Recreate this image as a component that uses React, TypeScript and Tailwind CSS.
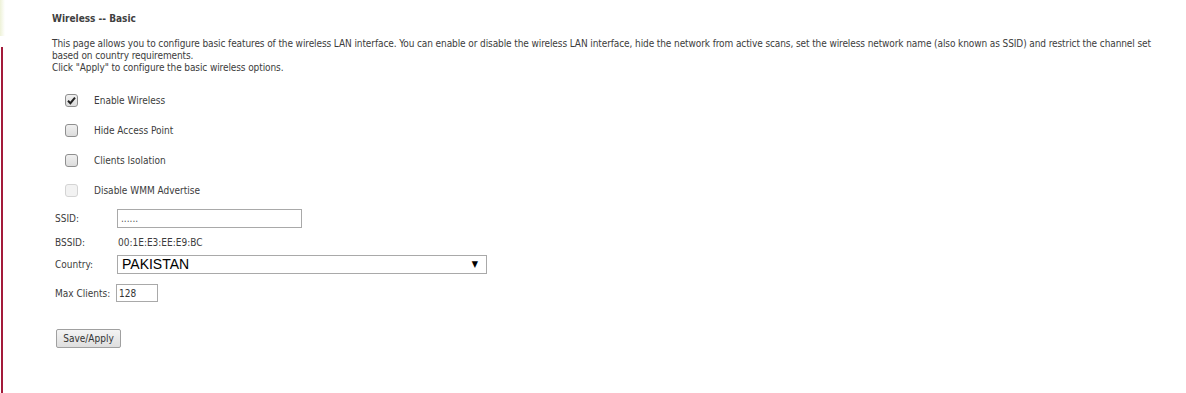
const checks = [
  { label: "Enable Wireless", checked: true, disabled: false },
  { label: "Hide Access Point", checked: false, disabled: false },
  { label: "Clients Isolation", checked: false, disabled: false },
  { label: "Disable WMM Advertise", checked: false, disabled: true },
];

const Box = ({ checked, disabled }: { checked: boolean; disabled: boolean }) => (
  <div
    className={`w-[13px] h-[13px] rounded-[3px] border flex items-center justify-center ${
      disabled
        ? "border-[#d4d4d4] bg-[#f2f2f2]"
        : "border-[#8f8f8f] bg-gradient-to-b from-[#f0f0f0] to-[#dcdcdc]"
    }`}
  >
    {checked && (
      <svg width="9" height="9" viewBox="0 0 9 9">
        <path d="M1 4.8 L3.4 7.2 L8 1.6" fill="none" stroke="#222" strokeWidth="2" />
      </svg>
    )}
  </div>
);

const App = () => {
  return (
    <div className="relative w-[1186px] h-[393px] bg-white overflow-hidden font-['DejaVu_Sans_Condensed','Liberation_Sans',sans-serif] text-[10px] text-[#3c3c3c]">
      <div className="absolute left-0 top-0 w-[5px] h-[36px] bg-gradient-to-r from-[#eef2d8] to-white" />
      <div className="absolute left-[1px] top-[47px] w-[2px] h-[346px] bg-[#a31a3a]" />

      <div className="pl-[52px] pt-[13px]">
        <div className="font-bold text-[#404040] leading-[12px]">Wireless -- Basic</div>
        <div className="mt-[13px] leading-[12px] pr-[10px] tracking-[-0.1px]">
          This page allows you to configure basic features of the wireless LAN interface. You can enable or
          disable the wireless LAN interface, hide the network from active scans, set the wireless network
          name (also known as SSID) and restrict the channel set based on country requirements.
          <br />
          Click "Apply" to configure the basic wireless options.
        </div>

        <div className="mt-[20px] flex flex-col gap-[17px] pl-[13px]">
          {checks.map((c) => (
            <div key={c.label} className="flex items-center h-[13px]">
              <Box checked={c.checked} disabled={c.disabled} />
              <span className="ml-[16px]">{c.label}</span>
            </div>
          ))}
        </div>

        <div className="mt-[12px] pl-[3px] flex flex-col">
          <div className="flex items-center h-[19px]">
            <span className="w-[62px]">SSID:</span>
            <div className="w-[185px] h-[19px] border border-[#a9a9a9] px-[3px] flex items-center text-[#555]">
              ......
            </div>
          </div>
          <div className="flex items-center h-[14px] mt-[7px]">
            <span className="w-[63px]">BSSID:</span>
            <span>00:1E:E3:EE:E9:BC</span>
          </div>
          <div className="flex items-center h-[19px] mt-[6px]">
            <span className="w-[62px]">Country:</span>
            <div className="w-[370px] h-[19px] border border-[#a9a9a9] pl-[4px] pr-[8px] flex items-center justify-between">
              <span className="font-['Liberation_Sans',sans-serif] text-[14px] text-black">PAKISTAN</span>
              <span className="text-[9px] text-black">▼</span>
            </div>
          </div>
          <div className="flex items-center h-[18px] mt-[10px]">
            <span className="w-[61px]">Max Clients:</span>
            <div className="w-[42px] h-[18px] border border-[#a9a9a9] px-[2px] flex items-center text-[#333]">
              128
            </div>
          </div>
        </div>

        <button className="mt-[27px] ml-[4px] w-[65px] h-[19px] border border-[#a0a0a0] rounded-[2px] bg-gradient-to-b from-[#f4f4f4] to-[#dedede] text-[#333] text-[10px] leading-none">
          Save/Apply
        </button>
      </div>
    </div>
  );
};

export default App;
